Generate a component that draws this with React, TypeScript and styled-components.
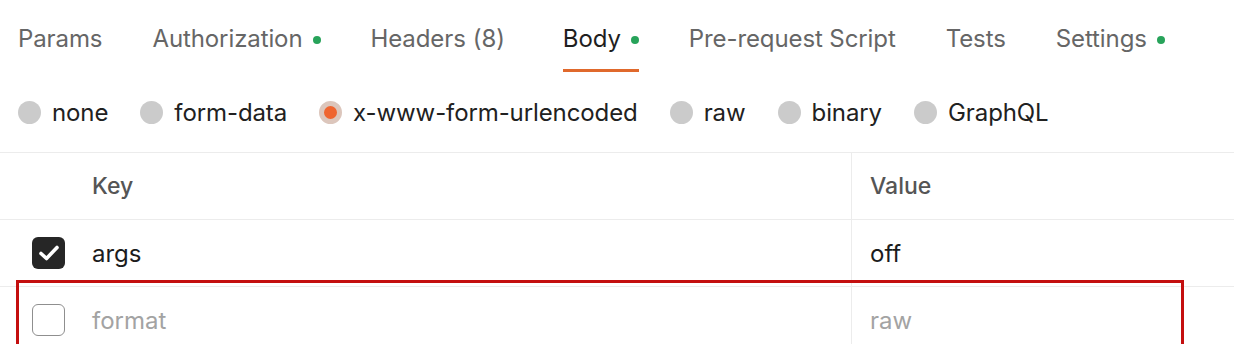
import React from "react";
import styled, { createGlobalStyle } from "styled-components";

const Global = createGlobalStyle`
  html, body { margin: 0; padding: 0; background: #ffffff; }
  body { font-family: Inter, "Noto Sans", sans-serif; overflow: hidden; }
`;

const Page = styled.div`
  position: relative;
  width: 1234px;
  height: 344px;
  overflow: hidden;
  background: #fff;
`;

const TabBar = styled.div`
  display: flex;
  align-items: stretch;
  gap: 50px;
  padding-left: 18px;
  height: 72px;
`;

const Tab = styled.div<{ $active?: boolean }>`
  display: flex;
  align-items: center;
  gap: 10px;
  padding-top: 8px;
  padding-bottom: 0;
  font-size: 24px;
  letter-spacing: -0.1px;
  color: ${(p) => (p.$active ? "#1f1f1f" : "#666666")};
  border-bottom: 3px solid ${(p) => (p.$active ? "#e0692c" : "transparent")};
  box-sizing: border-box;
`;

const Count = styled.span`
  margin-left: -3px;
  margin-right: 8px;
`;

const Dot = styled.span`
  width: 8px;
  height: 8px;
  border-radius: 50%;
  background: #27a35a;
  margin-top: 3px;
`;

const RadioRow = styled.div`
  display: flex;
  align-items: center;
  height: 80px;
  padding-left: 18px;
  gap: 32px;
`;

const RadioItem = styled.label`
  display: flex;
  align-items: center;
  gap: 11px;
  font-size: 24px;
  letter-spacing: -0.1px;
  color: #212121;
`;

const Radio = styled.span<{ $checked?: boolean }>`
  width: 23px;
  height: 23px;
  border-radius: 50%;
  box-sizing: border-box;
  background: ${(p) => (p.$checked ? "#ef6530" : "#cbcbcb")};
  border: ${(p) => (p.$checked ? "5px solid #dcc6bc" : "none")};
`;

const Table = styled.div`
  border-top: 1px solid #ececec;
`;

const Row = styled.div`
  display: grid;
  grid-template-columns: 74px 777px 1fr;
  height: 66px;
  border-bottom: 1px solid #ececec;
`;

const Cell = styled.div<{ $head?: boolean; $muted?: boolean }>`
  display: flex;
  align-items: center;
  padding-left: 18px;
  font-size: ${(p) => (p.$head ? "23px" : "24px")};
  font-weight: ${(p) => (p.$head ? 500 : 400)};
  color: ${(p) => (p.$head ? "#555555" : p.$muted ? "#a3a3a3" : "#1c1c1c")};
  & + & { border-left: 1px solid #ececec; }
`;

const CheckCell = styled.div`
  display: flex;
  align-items: center;
  justify-content: flex-start;
  padding-left: 32px;
`;

const Box = styled.span<{ $checked?: boolean }>`
  width: 33px;
  height: 32px;
  border-radius: 6px;
  box-sizing: border-box;
  display: flex;
  align-items: center;
  justify-content: center;
  background: ${(p) => (p.$checked ? "#262626" : "#ffffff")};
  border: ${(p) => (p.$checked ? "none" : "1.5px solid #8f8f8f")};
`;

const Highlight = styled.div`
  position: absolute;
  left: 16px;
  top: 280px;
  width: 1168px;
  height: 80px;
  border: 3px solid #c40f0f;
  box-sizing: border-box;
  pointer-events: none;
`;

type TabDef = { label: string; count?: number; dot?: boolean; active?: boolean };

const tabs: TabDef[] = [
  { label: "Params" },
  { label: "Authorization", dot: true },
  { label: "Headers", count: 8 },
  { label: "Body", dot: true, active: true },
  { label: "Pre-request Script" },
  { label: "Tests" },
  { label: "Settings", dot: true },
];

const radios = [
  { label: "none" },
  { label: "form-data" },
  { label: "x-www-form-urlencoded", checked: true },
  { label: "raw" },
  { label: "binary" },
  { label: "GraphQL" },
];

export default function App() {
  return (
    <Page>
      <Global />
      <TabBar>
        {tabs.map((t) => (
          <Tab key={t.label} $active={t.active}>
            {t.label}
            {t.count !== undefined && <Count>({t.count})</Count>}
            {t.dot && <Dot />}
          </Tab>
        ))}
      </TabBar>
      <RadioRow>
        {radios.map((r) => (
          <RadioItem key={r.label}>
            <Radio $checked={r.checked} />
            {r.label}
          </RadioItem>
        ))}
      </RadioRow>
      <Table>
        <Row>
          <CheckCell />
          <Cell $head>Key</Cell>
          <Cell $head>Value</Cell>
        </Row>
        <Row>
          <CheckCell>
            <Box $checked>
              <svg width="22" height="18" viewBox="0 0 22 18">
                <path d="M3 9.5 L8.5 14.5 L19 3.5" fill="none" stroke="#fff" strokeWidth="3.6" strokeLinecap="round" strokeLinejoin="round" />
              </svg>
            </Box>
          </CheckCell>
          <Cell>args</Cell>
          <Cell>off</Cell>
        </Row>
        <Row>
          <CheckCell>
            <Box />
          </CheckCell>
          <Cell $muted>format</Cell>
          <Cell $muted>raw</Cell>
        </Row>
      </Table>
      <Highlight />
    </Page>
  );
}
